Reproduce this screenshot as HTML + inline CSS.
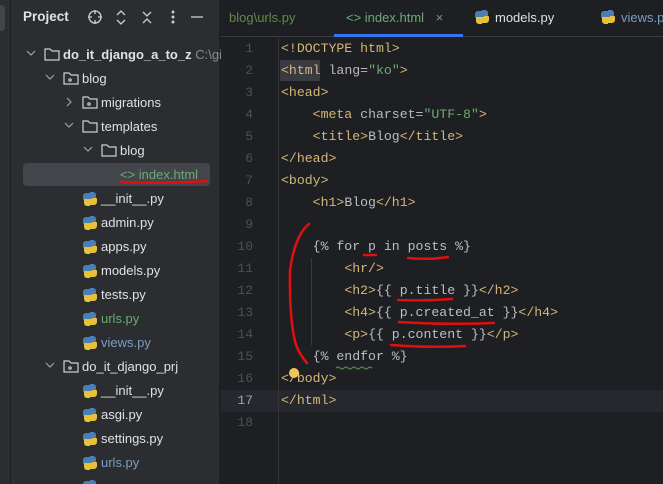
<!DOCTYPE html>
<html style="overflow:hidden;width:663px;height:484px"><head><meta charset="utf-8"><style>
*{margin:0;padding:0;box-sizing:border-box}
body{width:663px;height:484px;background:#1e1f22;position:relative;overflow:hidden;font-family:"Liberation Sans",sans-serif;color:#dfe1e5}
.strip{position:absolute;left:0;top:0;width:11px;height:484px;background:#2b2d30;border-right:1px solid #1e1f22}
.side{position:absolute;left:11px;top:0;width:209px;height:484px;background:#2b2d30;border-right:1px solid #1e1f22}
.row{position:absolute;height:24px;line-height:24px;font-size:13px;white-space:nowrap}
.t{position:absolute;font-size:13px;white-space:nowrap}
.tabs{position:absolute;left:221px;top:0;right:0;height:37px;border-bottom:1px solid #393b40;background:#1e1f22}
.code{position:absolute;left:281px;font-family:"Liberation Mono",monospace;font-size:13.2px;white-space:pre;color:#bcbec4;line-height:22px}
.ln{position:absolute;left:221px;width:32px;text-align:right;font-family:"Liberation Mono",monospace;font-size:13px;color:#4b5059;line-height:22px}
.tg{color:#d5b778}.s{color:#6aab73}.a{color:#bababa}
</style></head><body>
<div class="strip"><div style="position:absolute;left:0;top:5px;width:5px;height:26px;background:#43454a;border-radius:0 4px 4px 0"></div></div>
<div class="side">
<div class="t" style="left:12px;top:9px;font-weight:bold;font-size:13.5px">Project</div>
<svg style="position:absolute;left:76px;top:9px" width="130" height="18" fill="none" stroke="#ced0d6" stroke-width="1.3">
<circle cx="8" cy="8" r="6"/><path d="M8 1v4M8 11v4M1 8h4M11 8h4"/>
<path d="M30 6l4-4 4 4M30 11l4 4 4-4"/>
<path d="M56 3l4 4 4-4M56 14l4-4 4 4"/>
<circle cx="86" cy="3" r=".8" fill="#ced0d6"/><circle cx="86" cy="8" r=".8" fill="#ced0d6"/><circle cx="86" cy="13" r=".8" fill="#ced0d6"/>
<path d="M104 8h12"/></svg>
<div style="position:absolute;left:12px;top:163px;width:187px;height:23px;background:#43454a;border-radius:4px"></div>
</div>
<svg style="position:absolute;left:0;top:0" width="221" height="484" fill="none" stroke="#9da0a8" stroke-width="1.2">
<path d="M27 51l4 4 4-4M46 75l4 4 4-4M65 123l4 4 4-4M84 147l4 4 4-4M46 363l4 4 4-4M67 98l4 4-4 4"/>
<g stroke="#ced0d6"><path d="M45 49h5l2 2h7v9h-14z"/><path d="M64 73h5l2 2h7v9h-14z"/><circle cx="70" cy="80" r="1.2"/><path d="M83 97h5l2 2h7v9h-14z"/><circle cx="89" cy="104" r="1.2"/><path d="M83 121h5l2 2h7v9h-14z"/><path d="M102 145h5l2 2h7v9h-14z"/><path d="M64 361h5l2 2h7v9h-14z"/><circle cx="70" cy="368" r="1.2"/></g>
</svg>
<div class="row" style="left:63px;top:43px;font-weight:bold">do_it_django_a_to_z <span style="color:#868a91;font-weight:normal">C:\gi</span></div>
<div class="row" style="left:82px;top:67px">blog</div>
<div class="row" style="left:101px;top:91px">migrations</div>
<div class="row" style="left:101px;top:115px">templates</div>
<div class="row" style="left:120px;top:139px">blog</div>
<div class="row" style="left:120px;top:163px;color:#6aab73">&lt;&gt; index.html</div>
<div class="row" style="left:82px;top:355px">do_it_django_prj</div>
<svg style="position:absolute;left:0;top:0" width="221" height="484">
<path d="M120 182 Q160 184 208 181" stroke="#e01010" stroke-width="2.5" fill="none"/>
</svg>
<div class="tabs">
<div class="t" style="left:8px;top:10px;color:#5f8c4a">blog\urls.py</div>
<div class="t" style="left:125px;top:10px;color:#6aab73">&lt;&gt; index.html <span style="color:#868a91;margin-left:8px">×</span></div>
<div style="position:absolute;left:113px;top:34px;width:129px;height:3px;background:#3574f0"></div>
<div class="t" style="left:274px;top:10px">models.py</div>
<div class="t" style="left:400px;top:10px;color:#7a9ec2">views.py</div>
</div>
<div style="position:absolute;left:221px;top:390px;right:0;height:22px;background:#26282e"></div>
<div style="position:absolute;left:278px;top:38px;width:1px;height:446px;background:#313438"></div>
<div style="position:absolute;left:280px;top:60px;width:40px;height:21px;background:#393b40"></div>
<div class="ln" style="top:38px">1<br>2<br>3<br>4<br>5<br>6<br>7<br>8<br>9<br>10<br>11<br>12<br>13<br>14<br>15<br>16<br><span style="color:#a1a3ab">17</span><br>18</div>
<div class="code" style="top:38px"><span class="tg">&lt;!DOCTYPE html&gt;</span>
<span class="tg">&lt;html</span> <span class="a">lang=</span><span class="s">"ko"</span><span class="tg">&gt;</span>
<span class="tg">&lt;head&gt;</span>
    <span class="tg">&lt;meta</span> <span class="a">charset=</span><span class="s">"UTF-8"</span><span class="tg">&gt;</span>
    <span class="tg">&lt;title&gt;</span>Blog<span class="tg">&lt;/title&gt;</span>
<span class="tg">&lt;/head&gt;</span>
<span class="tg">&lt;body&gt;</span>
    <span class="tg">&lt;h1&gt;</span>Blog<span class="tg">&lt;/h1&gt;</span>

    {% for p in posts %}
        <span class="tg">&lt;hr/&gt;</span>
        <span class="tg">&lt;h2&gt;</span>{{ p.title }}<span class="tg">&lt;/h2&gt;</span>
        <span class="tg">&lt;h4&gt;</span>{{ p.created_at }}<span class="tg">&lt;/h4&gt;</span>
        <span class="tg">&lt;p&gt;</span>{{ p.content }}<span class="tg">&lt;/p&gt;</span>
    {% endfor %}
<span class="tg">&lt;/body&gt;</span>
<span class="tg">&lt;/html&gt;</span>
</div>
<div style="position:absolute;left:311px;top:258px;width:1px;height:87px;background:#393b40"></div>
<svg style="position:absolute;left:0;top:0" width="663" height="484" fill="none" stroke="#e01010" stroke-width="2.5" stroke-linecap="round">
<path d="M309 224 Q295 235 290 270 Q289 320 296 345 Q300 355 307 363"/>
<path d="M364 255h12M408 258 Q430 260 448 257M398 300 Q425 301 452 299M399 322 Q445 325 494 323M391 345 Q430 348 465 346"/>
<path d="M336 368q2-2 4 0t4 0 4 0 4 0 4 0 4 0 4 0 4 0 4 0" stroke="#5d9b4c" stroke-width="1"/>
<circle cx="294" cy="373" r="5" fill="#f2c55c" stroke="none"/>
</svg>
<div style="font-size:13px">
<div class="row" style="left:101px;top:187px">__init__.py</div>
<div class="row" style="left:101px;top:211px">admin.py</div>
<div class="row" style="left:101px;top:235px">apps.py</div>
<div class="row" style="left:101px;top:259px">models.py</div>
<div class="row" style="left:101px;top:283px">tests.py</div>
<div class="row" style="left:101px;top:307px;color:#6aab73">urls.py</div>
<div class="row" style="left:101px;top:331px;color:#7a9ec2">views.py</div>
<div class="row" style="left:101px;top:379px">__init__.py</div>
<div class="row" style="left:101px;top:403px">asgi.py</div>
<div class="row" style="left:101px;top:427px">settings.py</div>
<div class="row" style="left:101px;top:451px;color:#7a9ec2">urls.py</div>
</div>
<svg style="position:absolute;left:0;top:0" width="663" height="484">
<defs><g id="p"><path d="M7 0h3a3 3 0 0 1 3 3v4H5v1H1a1 1 0 0 1-1-1V4a3 3 0 0 1 3-3h4z" fill="#4a7fb5"/><path d="M7 14H4a3 3 0 0 1-3-3V7h8V6h4a1 1 0 0 1 1 1v3a3 3 0 0 1-3 3H7z" fill="#e8c13a"/></g></defs>
<use href="#p" x="83" y="192"/><use href="#p" x="83" y="216"/><use href="#p" x="83" y="240"/><use href="#p" x="83" y="264"/><use href="#p" x="83" y="288"/><use href="#p" x="83" y="312"/><use href="#p" x="83" y="336"/><use href="#p" x="83" y="384"/><use href="#p" x="83" y="408"/><use href="#p" x="83" y="432"/><use href="#p" x="83" y="456"/><use href="#p" x="83" y="480"/>
<use href="#p" x="475" y="10"/><use href="#p" x="601" y="10"/>
</svg>
</body></html>
